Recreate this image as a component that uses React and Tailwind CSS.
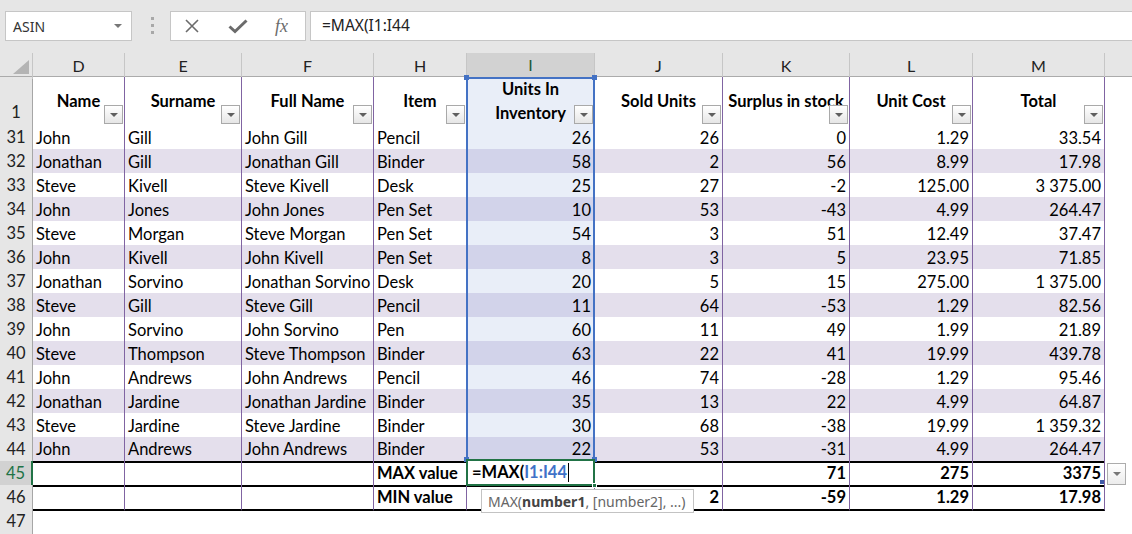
import React from 'react';

const GRID = 'grid grid-cols-[33px_92px_117px_132px_93px_128px_128px_127px_123px_132px_1fr]';

const rows = [
  [31, 'John', 'Gill', 'John Gill', 'Pencil', '26', '26', '0', '1.29', '33.54'],
  [32, 'Jonathan', 'Gill', 'Jonathan Gill', 'Binder', '58', '2', '56', '8.99', '17.98'],
  [33, 'Steve', 'Kivell', 'Steve Kivell', 'Desk', '25', '27', '-2', '125.00', '3 375.00'],
  [34, 'John', 'Jones', 'John Jones', 'Pen Set', '10', '53', '-43', '4.99', '264.47'],
  [35, 'Steve', 'Morgan', 'Steve Morgan', 'Pen Set', '54', '3', '51', '12.49', '37.47'],
  [36, 'John', 'Kivell', 'John Kivell', 'Pen Set', '8', '3', '5', '23.95', '71.85'],
  [37, 'Jonathan', 'Sorvino', 'Jonathan Sorvino', 'Desk', '20', '5', '15', '275.00', '1 375.00'],
  [38, 'Steve', 'Gill', 'Steve Gill', 'Pencil', '11', '64', '-53', '1.29', '82.56'],
  [39, 'John', 'Sorvino', 'John Sorvino', 'Pen', '60', '11', '49', '1.99', '21.89'],
  [40, 'Steve', 'Thompson', 'Steve Thompson', 'Binder', '63', '22', '41', '19.99', '439.78'],
  [41, 'John', 'Andrews', 'John Andrews', 'Pencil', '46', '74', '-28', '1.29', '95.46'],
  [42, 'Jonathan', 'Jardine', 'Jonathan Jardine', 'Binder', '35', '13', '22', '4.99', '64.87'],
  [43, 'Steve', 'Jardine', 'Steve Jardine', 'Binder', '30', '68', '-38', '19.99', '1 359.32'],
  [44, 'John', 'Andrews', 'John Andrews', 'Binder', '22', '53', '-31', '4.99', '264.47'],
];

const FilterBtn = () => (
  <div className="absolute right-[1px] bottom-[1px] w-[19px] h-[19px] border border-[#a9a9a9] bg-linear-to-b from-white to-[#e6e6e6] flex items-center justify-center">
    <div className="w-0 h-0 border-l-[4px] border-r-[4px] border-t-[4px] border-l-transparent border-r-transparent border-t-[#5f5f5f]" />
  </div>
);

const HeadCell = ({ children, sel }) => (
  <div className={`relative h-full border-r border-[#8064a2] flex items-center justify-center text-center font-bold leading-[24px] overflow-hidden whitespace-nowrap ${sel ? 'bg-[#e9eef8]' : 'bg-white'}`}>
    {children}
    <FilterBtn />
  </div>
);

const RowNum = ({ n, active, className = '' }) => (
  <div className={`h-full flex items-center justify-center border-b border-[#c9c9c9] ${active ? 'bg-[#d2d2d2] text-[#217346] border-r-2 border-r-[#217346]' : 'bg-[#e6e6e6] text-[#222] border-r border-r-[#a6a6a6]'} ${className}`}>
    {n}
  </div>
);

const Cell = ({ children, right, bold, bg, bottom }) => (
  <div className={`h-full border-r border-r-[#8064a2] px-[3px] pt-[1px] flex items-center overflow-hidden whitespace-nowrap ${right ? 'justify-end' : ''} ${bold ? 'font-bold' : ''} ${bg} ${bottom}`}>
    {children}
  </div>
);

const B2 = 'border-b-2 border-b-black';

export default function App() {
  return (
    <div className="relative w-[1132px] h-[534px] overflow-hidden bg-white text-black text-[16.5px] font-['Lato','Liberation_Sans',sans-serif]">
      {/* formula bar */}
      <div className="h-[53px] bg-[#e6e6e6] flex items-start pt-[11px] font-['Noto_Sans','Open_Sans',sans-serif]">
        <div className="ml-[5px] w-[127px] h-[30px] bg-white border border-[#c6c6c6] flex items-center justify-between pl-[7px] pr-[9px] text-[14px] text-[#333]">
          <span>ASIN</span>
          <div className="w-0 h-0 border-l-[4px] border-r-[4px] border-t-[4px] border-l-transparent border-r-transparent border-t-[#777]" />
        </div>
        <div className="ml-[19px] mt-[6px] flex flex-col gap-[4px]">
          <div className="w-[3px] h-[3px] bg-[#a8a8a8]" />
          <div className="w-[3px] h-[3px] bg-[#a8a8a8]" />
          <div className="w-[3px] h-[3px] bg-[#a8a8a8]" />
        </div>
        <div className="ml-[16px] w-[136px] h-[30px] bg-white border border-[#c6c6c6] flex items-center">
          <svg width="16" height="16" viewBox="0 0 16 16" className="ml-[13px]">
            <path d="M2 2L14 14M14 2L2 14" stroke="#6b6b6b" strokeWidth="1.6" fill="none" />
          </svg>
          <svg width="20" height="16" viewBox="0 0 20 16" className="ml-[28px]">
            <path d="M1.5 8.5L7 13.5L18.5 2.5" stroke="#6b6b6b" strokeWidth="3" fill="none" />
          </svg>
          <span className="ml-[27px] text-[18px] italic text-[#6b6b6b] font-['Liberation_Serif',serif] leading-none">fx</span>
        </div>
        <div className="ml-[4px] flex-1 h-[30px] bg-white border border-r-0 border-[#c6c6c6] flex items-center pl-[11px] text-[15.5px] text-[#222]">
          =MAX(I1:I44
        </div>
      </div>

      {/* column letters */}
      <div className={`${GRID} h-[24px] bg-[#e6e6e6] border-b border-[#ababab] text-[#222] text-[16px]`}>
        <div className="relative border-r border-[#c6c6c6]">
          <svg width="16" height="14" viewBox="0 0 16 14" className="absolute left-[13px] top-[7px]">
            <path d="M16 0L16 14L0 14Z" fill="#b4b4b4" />
          </svg>
        </div>
        {['D', 'E', 'F', 'H'].map((c) => (
          <div key={c} className="flex items-center justify-center border-r border-[#c6c6c6]">{c}</div>
        ))}
        <div className="flex items-center justify-center border-r border-[#c6c6c6] bg-[#d2d2d2] text-[#1d5a38] border-b-2 border-b-[#217346]">I</div>
        {['J', 'K', 'L', 'M'].map((c) => (
          <div key={c} className="flex items-center justify-center border-r border-[#c6c6c6]">{c}</div>
        ))}
        <div />
      </div>

      {/* header row 1 */}
      <div className={`${GRID} h-[48px]`}>
        <RowNum n="1" className="!items-end pb-[1px]" />
        {['Name', 'Surname', 'Full Name', 'Item'].map((t) => (
          <div key={t} className="h-full border-b-2 border-[#8e80ad]"><HeadCell>{t}</HeadCell></div>
        ))}
        <div className="h-full border-b-2 border-[#8e80ad]">
          <HeadCell sel>
            <span>Units In<br />Inventory</span>
          </HeadCell>
        </div>
        {['Sold Units', 'Surplus in stock', 'Unit Cost', 'Total'].map((t) => (
          <div key={t} className="h-full border-b-2 border-[#8e80ad]"><HeadCell>{t}</HeadCell></div>
        ))}
        <div />
      </div>

      {/* data rows */}
      {rows.map((r, i) => {
        const band = i % 2 === 1;
        const bg = band ? 'bg-[#e4dfec]' : 'bg-white';
        const selBg = band ? 'bg-[#d2d3ea]' : 'bg-[#e9eef8]';
        const bottom = r[0] === 44 ? B2 : 'border-b border-b-[#8064a2]';
        return (
          <div key={r[0]} className={`${GRID} h-[24px]`}>
            <RowNum n={r[0]} />
            <Cell bg={bg} bottom={bottom}>{r[1]}</Cell>
            <Cell bg={bg} bottom={bottom}>{r[2]}</Cell>
            <Cell bg={bg} bottom={bottom}>{r[3]}</Cell>
            <Cell bg={bg} bottom={bottom}>{r[4]}</Cell>
            <Cell bg={selBg} bottom={bottom} right>{r[5]}</Cell>
            <Cell bg={bg} bottom={bottom} right>{r[6]}</Cell>
            <Cell bg={bg} bottom={bottom} right>{r[7]}</Cell>
            <Cell bg={bg} bottom={bottom} right>{r[8]}</Cell>
            <Cell bg={bg} bottom={bottom} right>{r[9]}</Cell>
            <div />
          </div>
        );
      })}

      {/* totals */}
      <div className={`${GRID} h-[24px]`}>
        <RowNum n="45" active />
        <Cell bottom={B2} />
        <Cell bottom={B2} />
        <Cell bottom={B2} />
        <Cell bottom={B2} bold>MAX value</Cell>
        <Cell bottom={B2} />
        <Cell bottom={B2} />
        <Cell bottom={B2} right bold>71</Cell>
        <Cell bottom={B2} right bold>275</Cell>
        <Cell bottom={B2} right bold>3375</Cell>
        <div />
      </div>
      <div className={`${GRID} h-[24px]`}>
        <RowNum n="46" />
        <Cell bottom={B2} />
        <Cell bottom={B2} />
        <Cell bottom={B2} />
        <Cell bottom={B2} bold>MIN value</Cell>
        <Cell bottom={B2} />
        <Cell bottom={B2} right bold>2</Cell>
        <Cell bottom={B2} right bold>-59</Cell>
        <Cell bottom={B2} right bold>1.29</Cell>
        <Cell bottom={B2} right bold>17.98</Cell>
        <div />
      </div>
      <div className={`${GRID} h-[24px]`}>
        <RowNum n="47" />
      </div>

      {/* range finder around I1:I44 */}
      <div className="absolute left-[466px] top-[77px] w-[129px] h-[384px] border-2 border-[#4472c4] pointer-events-none" />
      <div className="absolute left-[464px] top-[75px] w-[5px] h-[5px] bg-[#4472c4]" />
      <div className="absolute left-[592px] top-[75px] w-[5px] h-[5px] bg-[#4472c4]" />
      <div className="absolute left-[464px] top-[457px] w-[5px] h-[5px] bg-[#4472c4]" />
      <div className="absolute left-[592px] top-[457px] w-[5px] h-[5px] bg-[#4472c4]" />

      {/* active cell I45 */}
      <div className="absolute left-[466px] top-[459px] w-[129px] h-[27px] border-2 border-[#217346] bg-white flex items-center pl-[4px] font-bold">
        <span>=MAX(</span>
        <span className="text-[#3f72c8]">I1:I44</span>
        <span className="ml-[1px] w-[1px] h-[19px] bg-black" />
      </div>
      <div className="absolute left-[592px] top-[483px] w-[5px] h-[5px] bg-[#217346] border border-white" />

      {/* table resize handle */}
      <div className="absolute left-[1100px] top-[480px] w-[4px] h-[4px] bg-[#3f5aa8]" />

      {/* autocomplete dropdown */}
      <div className="absolute left-[1107px] top-[463px] w-[19px] h-[22px] border border-[#acacac] bg-linear-to-b from-white to-[#ececec] flex items-center justify-center">
        <div className="w-0 h-0 border-l-[4px] border-r-[4px] border-t-[4px] border-l-transparent border-r-transparent border-t-[#777]" />
      </div>

      {/* function tooltip */}
      <div className="absolute left-[481px] top-[489px] w-[213px] h-[24px] border border-[#c3c3c3] bg-white flex items-center pl-[6px] text-[14px] text-[#666] font-['Noto_Sans','Open_Sans',sans-serif] whitespace-nowrap">
        MAX(<span className="font-bold text-[#444]">number1</span>, [number2], ...)
      </div>
    </div>
  );
}
